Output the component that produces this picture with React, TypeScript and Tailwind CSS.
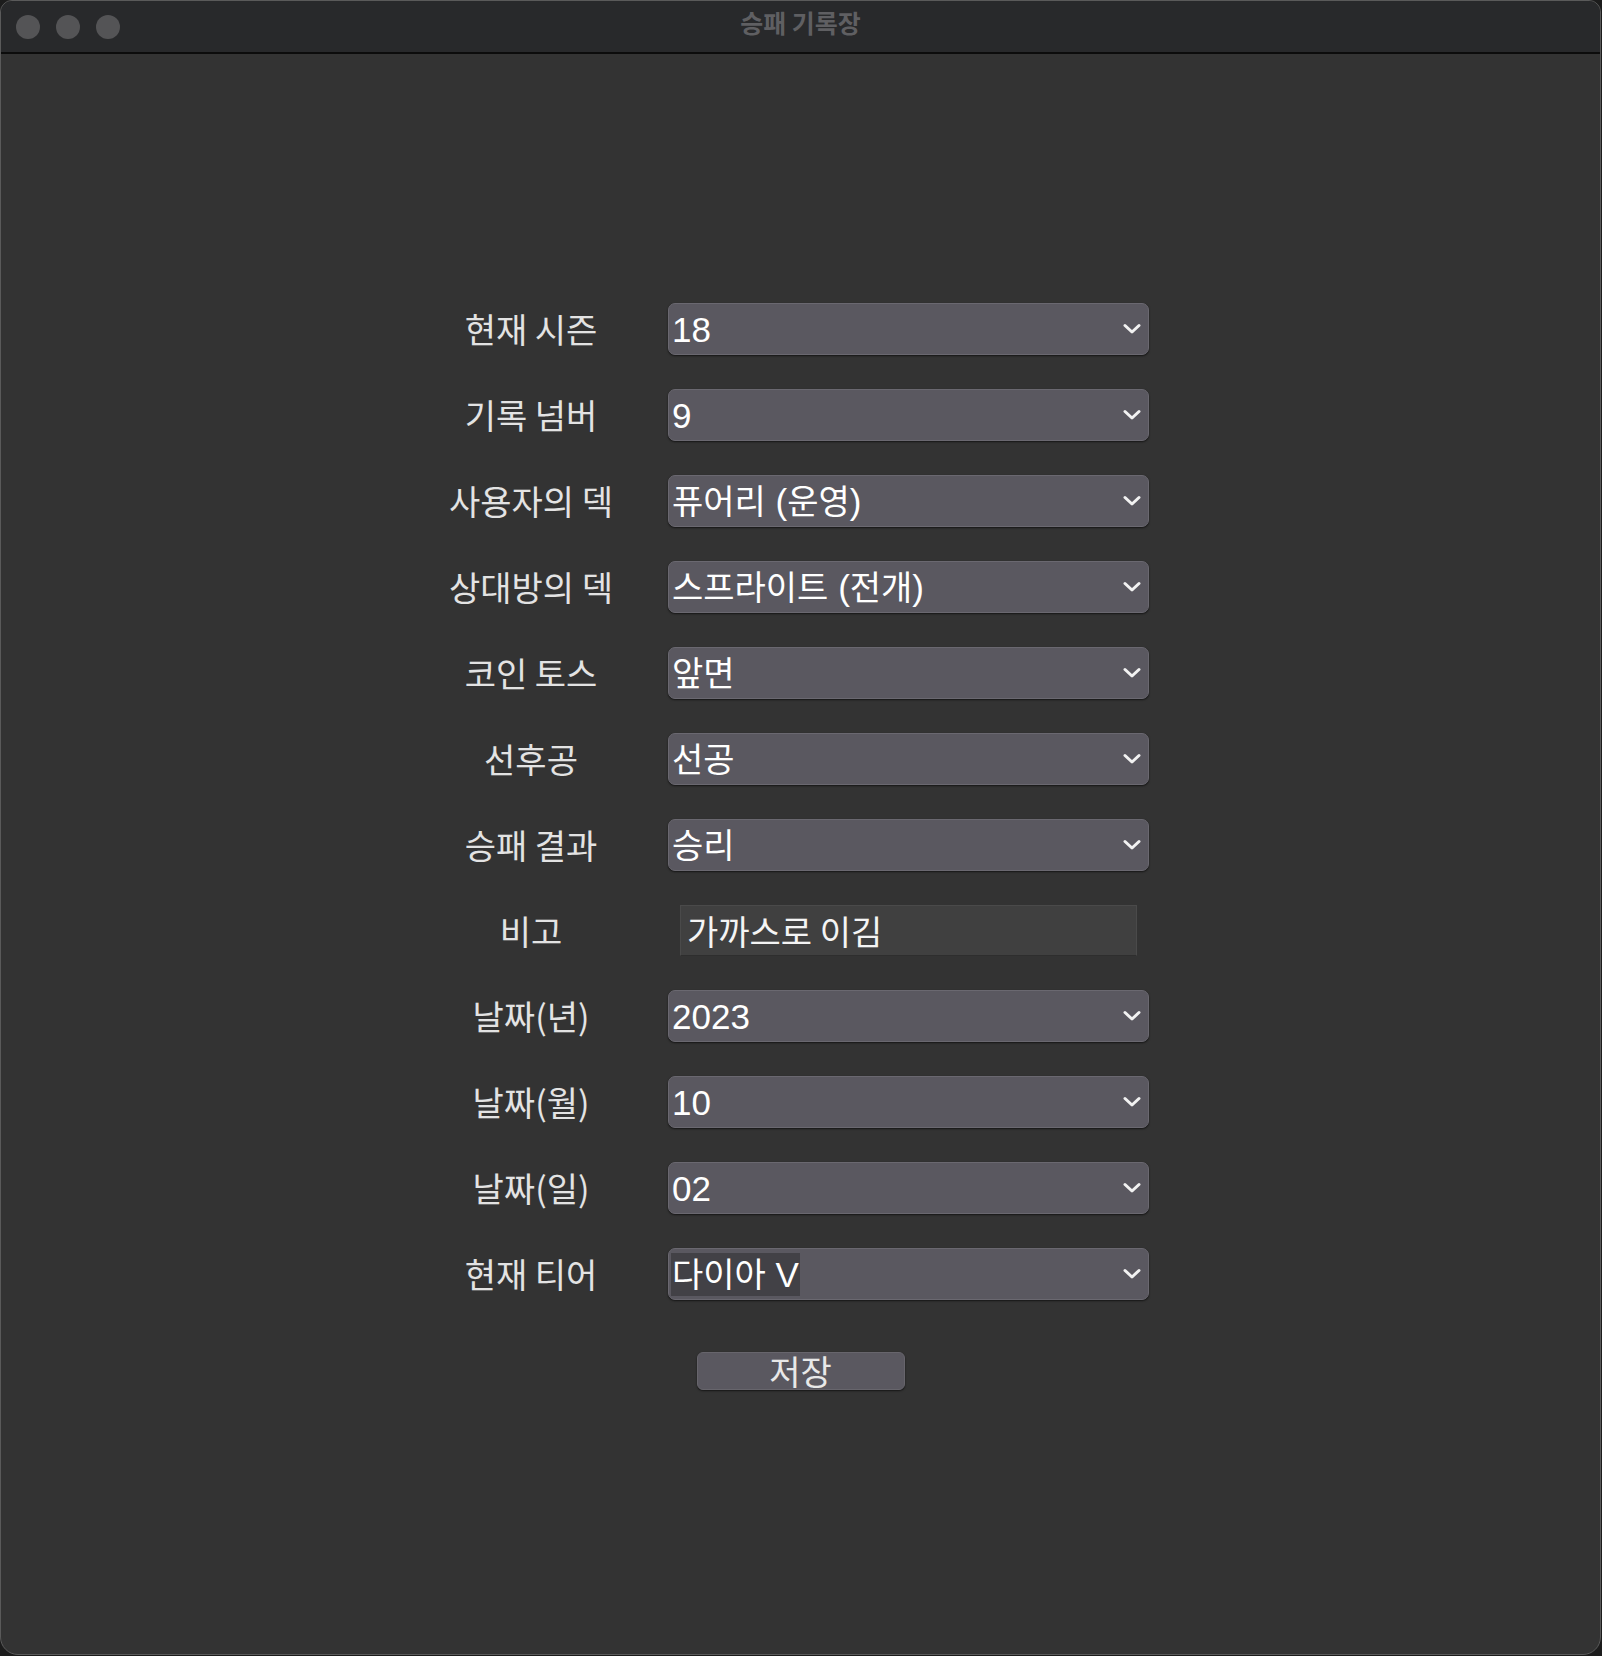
import { ReactNode } from 'react';

const rows = [
  { label: '현재 시즌', value: '18' },
  { label: '기록 넘버', value: '9' },
  { label: '사용자의 덱', value: '퓨어리 (운영)' },
  { label: '상대방의 덱', value: '스프라이트 (전개)' },
  { label: '코인 토스', value: '앞면' },
  { label: '선후공', value: '선공' },
  { label: '승패 결과', value: '승리' },
  { label: '비고', value: '가까스로 이김', input: true },
  { label: '날짜(년)', value: '2023' },
  { label: '날짜(월)', value: '10' },
  { label: '날짜(일)', value: '02' },
  { label: '현재 티어', value: '다이아 V', selected: true },
];

// hangul runs get the CJK face, the rest stays Arial-like
function Mixed({ text }: { text: string }) {
  const parts = text.split(/([\uac00-\ud7a3]+)/).filter(Boolean);
  return (
    <span className="whitespace-pre">
      {parts.map((part, i) =>
        /[\uac00-\ud7a3]/.test(part) ? (
          <span key={i} className="font-['Noto_Sans_CJK_KR',sans-serif] text-[34px]">
            {part}
          </span>
        ) : (
          <span key={i}>{part}</span>
        )
      )}
    </span>
  );
}

function Chevron() {
  return (
    <svg width="18" height="12" viewBox="0 0 18 12" className="shrink-0">
      <path d="M2 2.5 L9 9 L16 2.5" fill="none" stroke="#f2f2f2" strokeWidth="3" strokeLinecap="round" strokeLinejoin="round" />
    </svg>
  );
}

function Dropdown({ value, selected }: { value: string; selected?: boolean }) {
  return (
    <div className="flex h-[52px] w-[481px] items-center justify-between rounded-[7px] border border-[#6a6870] bg-[#5a5860] pl-[2px] pr-[7px] shadow-[0_1px_2px_rgba(0,0,0,0.6)]">
      <span
        className={
          "flex h-[43px] items-center px-[1px] font-['Liberation_Sans',Arial,sans-serif] text-[35px] leading-none text-white " +
          (selected ? 'bg-[#424146]' : '')
        }
      >
        <Mixed text={value} />
      </span>
      <Chevron />
    </div>
  );
}

function NoteInput({ value }: { value: string }) {
  return (
    <div className="ml-[12px] flex h-[51px] w-[457px] items-center border border-[#4a4a4a] border-b-[#2e2e2e] bg-[#404040] pl-[6px]">
      <span className="font-['Noto_Sans_CJK_KR',sans-serif] text-[34px] leading-none text-[#f4f4f4]">{value}</span>
    </div>
  );
}

function Row({ children, label }: { children: ReactNode; label: string }) {
  return (
    <div className="flex items-center">
      <div className="flex w-[200px] justify-center whitespace-pre font-['Noto_Sans_CJK_KR',sans-serif] text-[34px] leading-none text-[#e3e3e3]">
        {label}
      </div>
      <div className="ml-[37px]">{children}</div>
    </div>
  );
}

export default function App() {
  return (
    <div className="h-[1656px] w-[1602px] bg-[#1c1c1c]">
      <div className="flex h-[1655px] w-[1601px] flex-col overflow-hidden rounded-t-[12px] rounded-b-[18px] border border-[#5a5a5a] bg-[#333333]">
        <div className="relative flex h-[53px] shrink-0 items-center border-b-2 border-[#0c0c0c] bg-[#28292b]">
          <div className="ml-[15px] flex gap-[16px]">
            <span className="h-[24px] w-[24px] rounded-full bg-[#545456]" />
            <span className="h-[24px] w-[24px] rounded-full bg-[#545456]" />
            <span className="h-[24px] w-[24px] rounded-full bg-[#545456]" />
          </div>
          <div className="absolute inset-x-0 top-[9px] text-center font-['Noto_Sans_CJK_KR',sans-serif] text-[25px] font-bold leading-none text-[#5f5f62]">
            승패 기록장
          </div>
        </div>

        <div className="flex flex-col pt-[249px]">
          <div className="flex flex-col gap-[34px] pl-[430px]">
            {rows.map((row) => (
              <Row key={row.label} label={row.label}>
                {row.input ? <NoteInput value={row.value} /> : <Dropdown value={row.value} selected={row.selected} />}
              </Row>
            ))}
          </div>

          <div className="mt-[52px] flex justify-center">
            <button className="flex h-[38px] w-[208px] items-center justify-center rounded-[6px] border border-[#67656c] bg-[#5a5860] font-['Noto_Sans_CJK_KR',sans-serif] text-[34px] leading-none text-[#e8e8e8] shadow-[0_1px_2px_rgba(0,0,0,0.6)]">
              저장
            </button>
          </div>
        </div>
      </div>
    </div>
  );
}
